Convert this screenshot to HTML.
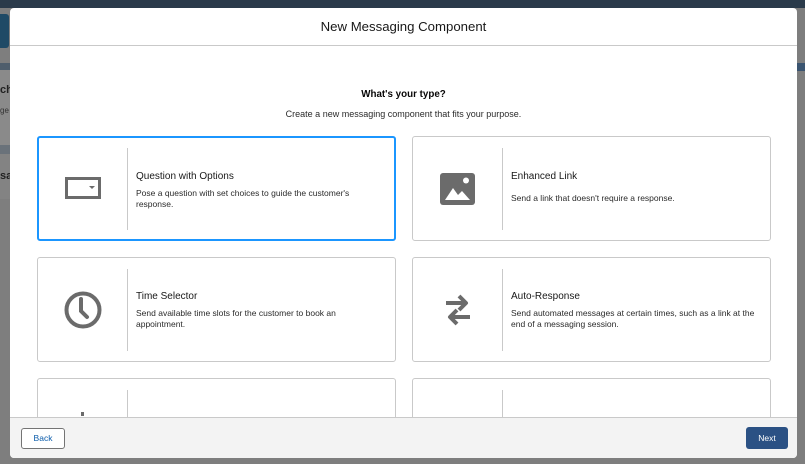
<!DOCTYPE html>
<html><head><meta charset="utf-8"><style>
*{box-sizing:border-box;margin:0;padding:0}
body{width:805px;height:464px;overflow:hidden;background:#7e7e7e;font-family:"Liberation Sans",sans-serif;position:relative;color:#080707}
.bg1{position:absolute;left:0;top:0;width:805px;height:8px;background:#2a3a4a}
.bgbtn{position:absolute;left:0;top:14px;width:9px;height:34px;background:#1f4a66;border-radius:0 3px 3px 0}
.bgstrip{position:absolute;left:0;top:63px;width:10px;height:7px;background:#4f5e6c}
.bgstrip2{position:absolute;left:0;top:145px;width:10px;height:9px;background:#6a727a}
.bgp{position:absolute;left:0;top:70px;width:10px;height:75px;background:#8a8a8a}
.bgp2{position:absolute;left:0;top:154px;width:10px;height:45px;background:#838383}
.bgr{position:absolute;left:797px;top:63px;width:8px;height:8px;background:#3a5470}
.modal{position:absolute;left:10px;top:8px;width:787px;height:450px;background:#fff;border-radius:4px;overflow:hidden}
.hdr{height:38px;border-bottom:1px solid #c9c9c9;text-align:center;font-size:13.2px;line-height:38px;color:#181818}
.t1{position:absolute;top:81px;left:0;width:100%;text-align:center;font-weight:bold;font-size:9.8px}
.t2{position:absolute;top:101px;left:0;width:100%;text-align:center;font-size:9px;color:#2b2b2b}
.card{position:absolute;width:359px;height:105px;border:1px solid #c9c9c9;border-radius:3px;background:#fff}
.card.sel{border:2px solid #1b96ff}
.card .div{position:absolute;left:89px;top:11px;width:1px;height:82px;background:#c9c9c9}
.card .ic{position:absolute;left:0;top:0;width:89px;height:100%;display:flex;align-items:center;justify-content:center}
.card h3{position:absolute;left:98px;top:33px;font-weight:normal;font-size:10px;color:#181818}
.card p{position:absolute;left:98px;top:50px;width:250px;font-size:8.5px;line-height:10.5px;color:#2b2b2b}
.ftr{position:absolute;left:0;top:409px;width:100%;height:41px;background:#f3f3f3;border-top:1px solid #c9c9c9}
.back{position:absolute;left:11px;top:10px;width:44px;height:21px;border:1px solid #747474;border-radius:3px;background:#fff;color:#0b5cab;font-size:8.5px;text-align:center;line-height:19px}
.next{position:absolute;left:736px;top:9px;width:42px;height:22px;border-radius:3px;background:#2b5184;color:#fff;font-size:8.5px;text-align:center;line-height:22px}
</style></head><body>
<div class="bg1"></div><div class="bgbtn"></div><div class="bgstrip"></div><div class="bgp"></div><div class="bgstrip2"></div><div class="bgp2"></div><div class="bgr"></div>
<div style="position:absolute;left:0;top:84px;font-size:11px;font-weight:bold;color:#222">ch</div>
<div style="position:absolute;left:0;top:106px;font-size:8px;color:#333">ge</div>
<div style="position:absolute;left:0;top:170px;font-size:11px;font-weight:bold;color:#222">sa</div>
<div class="modal">
<div class="hdr">New Messaging Component</div>
<div class="t1">What's your type?</div>
<div class="t2">Create a new messaging component that fits your purpose.</div>

<div class="card sel" style="left:27px;top:128px">
<div class="ic" style="margin-left:-1px;margin-top:-1px"><svg width="36" height="22" viewBox="0 0 36 22"><rect x="1.5" y="1.5" width="33" height="19" fill="none" stroke="#6b6b6b" stroke-width="3"/><path d="M24 9h6l-3 3z" fill="#6b6b6b"/></svg></div>
<div class="div" style="left:88px;top:10px"></div>
<h3 style="left:97px;top:33px">Question with Options</h3>
<p style="left:97px;top:50px">Pose a question with set choices to guide the customer's response.</p>
</div>

<div class="card" style="left:402px;top:128px">
<div class="ic"><svg width="35" height="32" viewBox="0 0 35 32"><rect x="0" y="0" width="35" height="32" rx="3" fill="#6b6b6b"/><path d="M5 27l8-12 5 7 4-4 8 9z" fill="#fff"/><circle cx="26" cy="7.5" r="3" fill="#fff"/></svg></div>
<div class="div"></div>
<h3 style="top:34px">Enhanced Link</h3>
<p style="top:56px">Send a link that doesn't require a response.</p>
</div>

<div class="card" style="left:27px;top:249px">
<div class="ic"><svg width="40" height="40" viewBox="0 0 40 40"><circle cx="20" cy="20" r="16.5" fill="none" stroke="#6b6b6b" stroke-width="4"/><path d="M18 9v12l6 6" fill="none" stroke="#6b6b6b" stroke-width="4" stroke-linecap="round"/></svg></div>
<div class="div"></div>
<h3>Time Selector</h3>
<p>Send available time slots for the customer to book an appointment.</p>
</div>

<div class="card" style="left:402px;top:249px">
<div class="ic"><svg width="26" height="34" viewBox="0 0 26 34"><path d="M1 10h19M14 3l7 7-7 7" fill="none" stroke="#6b6b6b" stroke-width="4" stroke-linejoin="round"/><path d="M25 24H6M12 17l-7 7 7 7" fill="none" stroke="#6b6b6b" stroke-width="4" stroke-linejoin="round"/></svg></div>
<div class="div"></div>
<h3>Auto-Response</h3>
<p>Send automated messages at certain times, such as a link at the end of a messaging session.</p>
</div>

<div class="card" style="left:27px;top:370px">
<div class="div"></div>
<div style="position:absolute;left:43px;top:33px;width:3px;height:4px;background:#6b6b6b"></div>
</div>
<div class="card" style="left:402px;top:370px"><div class="div"></div></div>

<div class="ftr"><div class="back">Back</div><div class="next">Next</div></div>
</div>
</body></html>
